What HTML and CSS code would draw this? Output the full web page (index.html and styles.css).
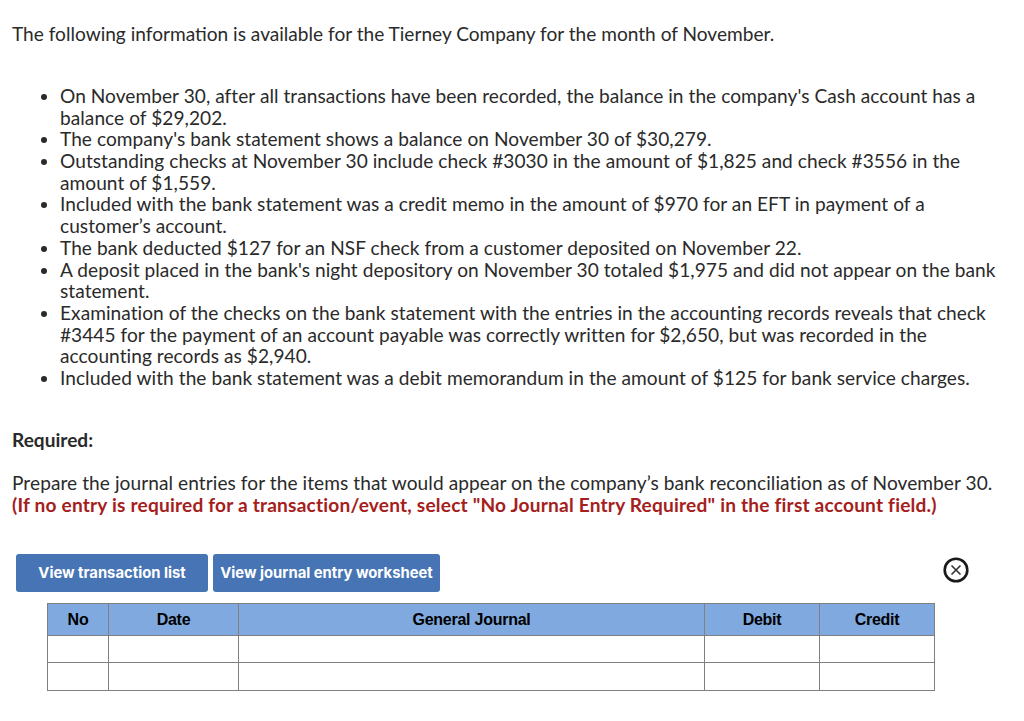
FILE: index.html
```html
<!DOCTYPE html>
<html lang="en">
<head>
  <meta charset="UTF-8" />
  <title>Tierney Company</title>
  <link rel="stylesheet" href="styles.css">
</head>
<body>
  <p class="intro">The following information is available for the Tierney Company for the month of November.</p>

  <ul class="facts">
    <li>On November 30, after all transactions have been recorded, the balance in the company's Cash account has a balance of $29,202.</li>
    <li>The company's bank statement shows a balance on November 30 of $30,279.</li>
    <li>Outstanding checks at November 30 include check #3030 in the amount of $1,825 and check #3556 in the amount of $1,559.</li>
    <li>Included with the bank statement was a credit memo in the amount of $970 for an EFT in payment of a customer’s account.</li>
    <li>The bank deducted $127 for an NSF check from a customer deposited on November 22.</li>
    <li>A deposit placed in the bank's night depository on November 30 totaled $1,975 and did not appear on the bank statement.</li>
    <li>Examination of the checks on the bank statement with the entries in the accounting records reveals that check #3445 for the payment of an account payable was correctly written for $2,650, but was recorded in the accounting records as $2,940.</li>
    <li>Included with the bank statement was a debit memorandum in the amount of $125 for bank service charges.</li>
  </ul>

  <p class="required">Required:</p>

  <p class="prepare">Prepare the journal entries for the items that would appear on the company’s bank reconciliation as of November 30.<br>
    <strong class="note">(If no entry is required for a transaction/event, select "No Journal Entry Required" in the first account field.)</strong></p>

  <div class="actions">
    <button class="btn btn-list">View transaction list</button>
    <button class="btn btn-sheet">View journal entry worksheet</button>
    <svg class="close-icon" width="26" height="26" viewBox="0 0 26 26" aria-hidden="true">
      <circle cx="13" cy="13" r="11.3" fill="none" stroke="#1a1a1a" stroke-width="2.6" />
      <path d="M8.5 8.5 L17.5 17.5 M17.5 8.5 L8.5 17.5" fill="none" stroke="#333" stroke-width="1.6" />
    </svg>
  </div>

  <table class="journal">
    <thead>
      <tr>
        <th class="col-no">No</th>
        <th class="col-date">Date</th>
        <th class="col-entry">General Journal</th>
        <th class="col-amt">Debit</th>
        <th class="col-amt">Credit</th>
      </tr>
    </thead>
    <tbody>
      <tr><td></td><td></td><td></td><td></td><td></td></tr>
      <tr class="row-last"><td></td><td></td><td></td><td></td><td></td></tr>
    </tbody>
  </table>
</body>
</html>
```

FILE: styles.css
```css
html, body { margin: 0; background: #fff; }
body { font-family: "Lato", "Liberation Sans", sans-serif; font-size: 19.1px; line-height: 21.7px; color: #2a2a2a; padding: 23px 12px 0; height: 698px; overflow: hidden; }
p { margin: 0; }
.intro { margin-bottom: 40.2px; }
.facts { margin: 0 0 40.3px; padding: 0 14px 0 48px; letter-spacing: 0.05px; }
.required { font-weight: 700; margin-bottom: 21.5px; }
.prepare { letter-spacing: 0.07px; }
.note { color: #a5201c; font-weight: 700; letter-spacing: 0.2px; }
.actions { display: flex; align-items: center; gap: 5px; margin: 38px 0 11px 4px; height: 38px; }
.btn { height: 38px; border: 0; border-radius: 3px; background: #4674b5; color: #fff; font-family: "Inter", "Liberation Sans", sans-serif; font-size: 14.8px; font-weight: 700; padding: 1px 0 0; }
.btn-list { width: 192px; }
.btn-sheet { width: 227px; }
.close-icon { align-self: flex-start; margin: 3px 43px 0 auto; }
.journal { width: 887px; margin-left: 35px; border-collapse: collapse; table-layout: fixed; font-family: "Liberation Sans", sans-serif; }
.journal th, .journal td { box-sizing: border-box; border: 1px solid #7f7f7f; padding: 0; }
.journal th { background: #7fa9df; color: #000; font-size: 16px; letter-spacing: -0.25px; height: 32px; padding-top: 1px; }
.journal td { height: 27px; background: #fff; }
.journal .row-last td { height: 28px; }
.col-no { width: 61px; }
.col-date { width: 130px; }
.col-entry { width: 466px; }
.col-amt { width: 115px; }
```
